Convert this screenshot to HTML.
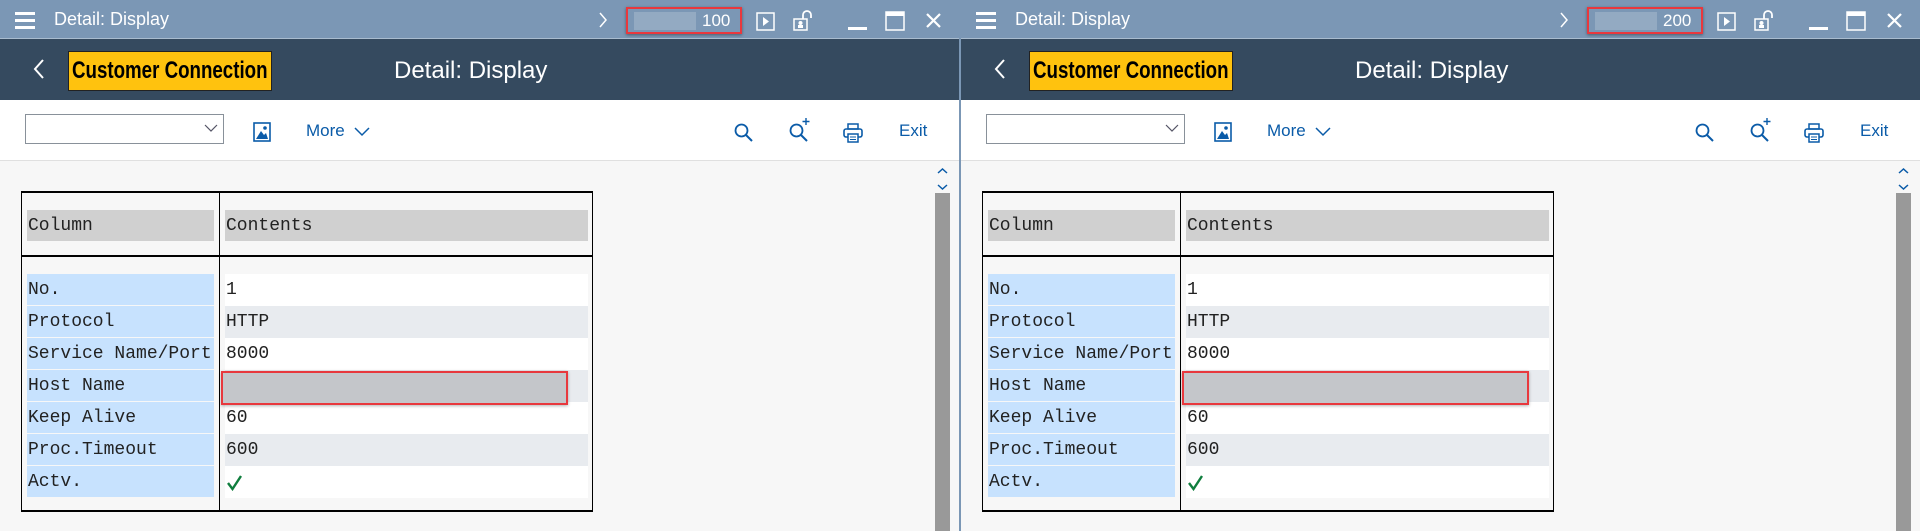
<!DOCTYPE html>
<html><head><meta charset="utf-8"><style>
*{margin:0;padding:0;box-sizing:border-box}
body{width:1920px;height:531px;overflow:hidden;background:#7b97b5;font-family:"Liberation Sans",sans-serif;position:relative}
.p{position:absolute;top:0;width:959px;height:531px;overflow:hidden}
.tb{position:absolute;left:0;top:0;width:959px;height:39px;background:#7b97b5;border-bottom:1px solid #a9bccf}
.tt{position:absolute;left:54px;top:9px;color:#fff;font-size:18px}
.hd{position:absolute;left:0;top:39px;width:959px;height:61px;background:#354a5f}
.cc{position:absolute;left:68px;top:12px;width:204px;height:40px;background:#ffc20e;border:1px solid #222;font-weight:bold;font-size:24px;color:#000;line-height:38px;white-space:nowrap;overflow:hidden}
.cc span{display:inline-block;transform:scaleX(0.78);transform-origin:0 0;margin-left:3px}
.ht{position:absolute;left:394px;top:18px;color:#fff;font-size:24px}
.tl{position:absolute;left:0;top:100px;width:959px;height:61px;background:#fff;border-bottom:1px solid #e0e0e0}
.dd{position:absolute;left:25px;top:14px;width:199px;height:30px;border:1px solid #89919a;background:#fff}
.bl{color:#0a5ba8;font-size:17px;position:absolute}
.ct{position:absolute;left:0;top:161px;width:959px;height:370px;background:#f7f7f7}
.tbl{position:absolute;left:21px;top:30px;width:572px;height:321px;border-top:2px solid #000;border-bottom:2px solid #000;border-left:1px solid #000;border-right:1px solid #000;background:#f7f7f7}
.vd{position:absolute;left:197px;top:0;width:1px;height:100%;background:#000}
.hl{position:absolute;left:0;top:62px;width:100%;height:2px;background:#000}
.c{position:absolute;font-family:"Liberation Mono",monospace;font-size:18px;line-height:32px;color:#222;white-space:nowrap;padding-left:1px}
.lb{left:5px;width:187px;background:#c7e2fe;height:31px}
.vl{left:203px;width:363px;height:32px}
.sb{position:absolute;left:935px;top:32px;width:15px;height:340px;background:#999}
svg{position:absolute}
</style></head><body>

<div class="p" style="left:0">
 <div class="tb">
  <svg style="left:15px;top:11px" width="22" height="18"><rect y="1" width="20" height="3" fill="#fff"/><rect y="8" width="20" height="3" fill="#fff"/><rect y="15" width="20" height="3" fill="#fff"/></svg>
  <div class="tt">Detail: Display</div>
  <svg style="left:598px;top:12px" width="10" height="16"><path d="M2 1 L8 8 L2 15" stroke="#fff" fill="none" stroke-width="1.5"/></svg>
  <div style="position:absolute;left:626px;top:7px;width:116px;height:27px;border:2px solid #e8383d;box-shadow:0 1px 3px rgba(0,0,0,.4)"><div style="position:absolute;left:6px;top:3px;width:62px;height:18px;background:#93aac2"></div><span style="position:absolute;left:74px;top:2px;color:#fff;font-size:17px">100</span></div>
  <svg style="left:756px;top:12px" width="20" height="19"><rect x="1" y="1" width="17" height="17" fill="none" stroke="#fff" stroke-width="1.5"/><path d="M7 5 L13 9.5 L7 14Z" fill="#fff"/></svg>
  <svg style="left:793px;top:10px" width="21" height="21"><rect x="1" y="9" width="13" height="11" fill="none" stroke="#fff" stroke-width="1.5"/><path d="M10 9 V5 a4 4 0 0 1 8 0 V8" fill="none" stroke="#fff" stroke-width="1.8"/><circle cx="7.5" cy="13" r="2" fill="#fff"/><rect x="5" y="15" width="5" height="3" fill="#fff"/></svg>
  <div style="position:absolute;left:848px;top:27px;width:19px;height:3px;background:#fff"></div>
  <svg style="left:885px;top:11px" width="20" height="20"><rect x="1" y="1" width="18" height="18" fill="none" stroke="#fff" stroke-width="1.5"/><rect x="1" y="1" width="18" height="4" fill="#fff"/></svg>
  <svg style="left:926px;top:13px" width="15" height="15"><path d="M1 1 L14 14 M14 1 L1 14" stroke="#fff" stroke-width="2.2"/></svg>
 </div>
 <div class="hd">
  <svg style="left:33px;top:20px" width="12" height="20"><path d="M10 1 L2 10 L10 19" stroke="#fff" fill="none" stroke-width="2"/></svg>
  <div class="cc"><span>Customer Connection</span></div>
  <div class="ht">Detail: Display</div>
 </div>
 <div class="tl">
  <div class="dd"><svg style="left:178px;top:8px" width="14" height="10"><path d="M1 2 L7 8 L13 2" stroke="#556" fill="none" stroke-width="1.2"/></svg></div>
  <svg style="left:253px;top:22px" width="18" height="20"><rect x="1" y="1" width="16" height="18" fill="none" stroke="#0a5ba8" stroke-width="1.6"/><path d="M3 17 L8 9 L11 13 L13 11 L15 17Z" fill="#0a5ba8"/><circle cx="12" cy="6" r="1.8" fill="#0a5ba8"/></svg>
  <div class="bl" style="left:306px;top:21px">More</div>
  <svg style="left:354px;top:27px" width="16" height="10"><path d="M1 1 L8 8 L15 1" stroke="#0a5ba8" fill="none" stroke-width="1.5"/></svg>
  <svg style="left:734px;top:23px" width="20" height="20"><circle cx="7.5" cy="7.5" r="6" fill="none" stroke="#0a5ba8" stroke-width="1.8"/><path d="M12 12 L18 18" stroke="#0a5ba8" stroke-width="2"/></svg>
  <svg style="left:788px;top:17px" width="24" height="26"><circle cx="8.5" cy="13.5" r="6" fill="none" stroke="#0a5ba8" stroke-width="1.8"/><path d="M13 18 L19 24" stroke="#0a5ba8" stroke-width="2"/><path d="M18 1 V8 M14.5 4.5 H21.5" stroke="#0a5ba8" stroke-width="1.4"/></svg>
  <svg style="left:843px;top:23px" width="20" height="20"><rect x="5" y="1" width="10" height="5" fill="none" stroke="#0a5ba8" stroke-width="1.5"/><rect x="1" y="6" width="18" height="8" rx="2" fill="none" stroke="#0a5ba8" stroke-width="1.6"/><rect x="5" y="11" width="10" height="8" fill="#fff" stroke="#0a5ba8" stroke-width="1.5"/><path d="M7 14 H13 M7 16.5 H13" stroke="#0a5ba8"/></svg>
  <div class="bl" style="left:899px;top:21px">Exit</div>
 </div>
 <div class="ct">
  <svg style="left:936px;top:5px" width="13" height="26"><path d="M2 7 L6.5 3 L11 7 M2 19 L6.5 23 L11 19" stroke="#0a5ba8" fill="none" stroke-width="1.5"/></svg>
  <div class="sb"></div>
  <div class="tbl">
   <div class="vd"></div><div class="hl"></div>
   <div class="c lb" style="top:17px;background:#d0d0d0;height:31px">Column</div>
   <div class="c vl" style="top:17px;background:#d0d0d0;height:31px">Contents</div>
   <div class="c lb" style="top:81px">No.</div><div class="c vl" style="top:81px;background:#fff">1</div>
   <div class="c lb" style="top:113px">Protocol</div><div class="c vl" style="top:113px;background:#e8ebef">HTTP</div>
   <div class="c lb" style="top:145px">Service Name/Port</div><div class="c vl" style="top:145px;background:#fff">8000</div>
   <div class="c lb" style="top:177px">Host Name</div><div class="c vl" style="top:177px;background:#e8ebef"></div>
   <div class="c lb" style="top:209px">Keep Alive</div><div class="c vl" style="top:209px;background:#fff">60</div>
   <div class="c lb" style="top:241px">Proc.Timeout</div><div class="c vl" style="top:241px;background:#e8ebef">600</div>
   <div class="c lb" style="top:273px">Actv.</div><div class="c vl" style="top:273px;background:#fff"></div>
   <svg style="left:205px;top:282px" width="16" height="16"><path d="M1 8 L5.5 14 L14 1" stroke="#107e3e" fill="none" stroke-width="2.4"/></svg>
   <div style="position:absolute;left:199px;top:178px;width:347px;height:34px;border:2px solid #e8383d;box-shadow:0 1px 3px rgba(0,0,0,.3);background:#c4c6ca"></div>
  </div>
 </div>
</div>

<div class="p" style="left:961px">
 <div class="tb">
  <svg style="left:15px;top:11px" width="22" height="18"><rect y="1" width="20" height="3" fill="#fff"/><rect y="8" width="20" height="3" fill="#fff"/><rect y="15" width="20" height="3" fill="#fff"/></svg>
  <div class="tt">Detail: Display</div>
  <svg style="left:598px;top:12px" width="10" height="16"><path d="M2 1 L8 8 L2 15" stroke="#fff" fill="none" stroke-width="1.5"/></svg>
  <div style="position:absolute;left:626px;top:7px;width:116px;height:27px;border:2px solid #e8383d;box-shadow:0 1px 3px rgba(0,0,0,.4)"><div style="position:absolute;left:6px;top:3px;width:62px;height:18px;background:#93aac2"></div><span style="position:absolute;left:74px;top:2px;color:#fff;font-size:17px">200</span></div>
  <svg style="left:756px;top:12px" width="20" height="19"><rect x="1" y="1" width="17" height="17" fill="none" stroke="#fff" stroke-width="1.5"/><path d="M7 5 L13 9.5 L7 14Z" fill="#fff"/></svg>
  <svg style="left:793px;top:10px" width="21" height="21"><rect x="1" y="9" width="13" height="11" fill="none" stroke="#fff" stroke-width="1.5"/><path d="M10 9 V5 a4 4 0 0 1 8 0 V8" fill="none" stroke="#fff" stroke-width="1.8"/><circle cx="7.5" cy="13" r="2" fill="#fff"/><rect x="5" y="15" width="5" height="3" fill="#fff"/></svg>
  <div style="position:absolute;left:848px;top:27px;width:19px;height:3px;background:#fff"></div>
  <svg style="left:885px;top:11px" width="20" height="20"><rect x="1" y="1" width="18" height="18" fill="none" stroke="#fff" stroke-width="1.5"/><rect x="1" y="1" width="18" height="4" fill="#fff"/></svg>
  <svg style="left:926px;top:13px" width="15" height="15"><path d="M1 1 L14 14 M14 1 L1 14" stroke="#fff" stroke-width="2.2"/></svg>
 </div>
 <div class="hd">
  <svg style="left:33px;top:20px" width="12" height="20"><path d="M10 1 L2 10 L10 19" stroke="#fff" fill="none" stroke-width="2"/></svg>
  <div class="cc"><span>Customer Connection</span></div>
  <div class="ht">Detail: Display</div>
 </div>
 <div class="tl">
  <div class="dd"><svg style="left:178px;top:8px" width="14" height="10"><path d="M1 2 L7 8 L13 2" stroke="#556" fill="none" stroke-width="1.2"/></svg></div>
  <svg style="left:253px;top:22px" width="18" height="20"><rect x="1" y="1" width="16" height="18" fill="none" stroke="#0a5ba8" stroke-width="1.6"/><path d="M3 17 L8 9 L11 13 L13 11 L15 17Z" fill="#0a5ba8"/><circle cx="12" cy="6" r="1.8" fill="#0a5ba8"/></svg>
  <div class="bl" style="left:306px;top:21px">More</div>
  <svg style="left:354px;top:27px" width="16" height="10"><path d="M1 1 L8 8 L15 1" stroke="#0a5ba8" fill="none" stroke-width="1.5"/></svg>
  <svg style="left:734px;top:23px" width="20" height="20"><circle cx="7.5" cy="7.5" r="6" fill="none" stroke="#0a5ba8" stroke-width="1.8"/><path d="M12 12 L18 18" stroke="#0a5ba8" stroke-width="2"/></svg>
  <svg style="left:788px;top:17px" width="24" height="26"><circle cx="8.5" cy="13.5" r="6" fill="none" stroke="#0a5ba8" stroke-width="1.8"/><path d="M13 18 L19 24" stroke="#0a5ba8" stroke-width="2"/><path d="M18 1 V8 M14.5 4.5 H21.5" stroke="#0a5ba8" stroke-width="1.4"/></svg>
  <svg style="left:843px;top:23px" width="20" height="20"><rect x="5" y="1" width="10" height="5" fill="none" stroke="#0a5ba8" stroke-width="1.5"/><rect x="1" y="6" width="18" height="8" rx="2" fill="none" stroke="#0a5ba8" stroke-width="1.6"/><rect x="5" y="11" width="10" height="8" fill="#fff" stroke="#0a5ba8" stroke-width="1.5"/><path d="M7 14 H13 M7 16.5 H13" stroke="#0a5ba8"/></svg>
  <div class="bl" style="left:899px;top:21px">Exit</div>
 </div>
 <div class="ct">
  <svg style="left:936px;top:5px" width="13" height="26"><path d="M2 7 L6.5 3 L11 7 M2 19 L6.5 23 L11 19" stroke="#0a5ba8" fill="none" stroke-width="1.5"/></svg>
  <div class="sb"></div>
  <div class="tbl">
   <div class="vd"></div><div class="hl"></div>
   <div class="c lb" style="top:17px;background:#d0d0d0;height:31px">Column</div>
   <div class="c vl" style="top:17px;background:#d0d0d0;height:31px">Contents</div>
   <div class="c lb" style="top:81px">No.</div><div class="c vl" style="top:81px;background:#fff">1</div>
   <div class="c lb" style="top:113px">Protocol</div><div class="c vl" style="top:113px;background:#e8ebef">HTTP</div>
   <div class="c lb" style="top:145px">Service Name/Port</div><div class="c vl" style="top:145px;background:#fff">8000</div>
   <div class="c lb" style="top:177px">Host Name</div><div class="c vl" style="top:177px;background:#e8ebef"></div>
   <div class="c lb" style="top:209px">Keep Alive</div><div class="c vl" style="top:209px;background:#fff">60</div>
   <div class="c lb" style="top:241px">Proc.Timeout</div><div class="c vl" style="top:241px;background:#e8ebef">600</div>
   <div class="c lb" style="top:273px">Actv.</div><div class="c vl" style="top:273px;background:#fff"></div>
   <svg style="left:205px;top:282px" width="16" height="16"><path d="M1 8 L5.5 14 L14 1" stroke="#107e3e" fill="none" stroke-width="2.4"/></svg>
   <div style="position:absolute;left:199px;top:178px;width:347px;height:34px;border:2px solid #e8383d;box-shadow:0 1px 3px rgba(0,0,0,.3);background:#c4c6ca"></div>
  </div>
 </div>
</div>
</body></html>
